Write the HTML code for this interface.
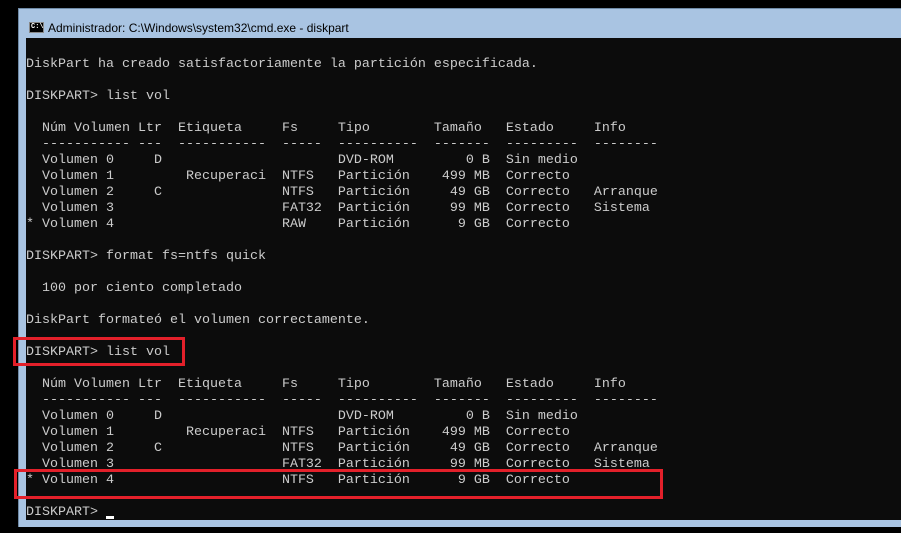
<!DOCTYPE html>
<html><head><meta charset="utf-8"><style>
html,body{margin:0;padding:0;background:#000;width:901px;height:533px;overflow:hidden;position:relative}
#win{position:absolute;left:18px;top:8px;width:900px;height:519px;background:#a9c4e2;border-left:1px solid #6f8aa6;border-top:1px solid #6f8aa6;box-sizing:border-box}
#title{position:absolute;left:48px;top:21px;font:12px "Liberation Sans",sans-serif;color:#000}
#icon{position:absolute;left:29px;top:22px;width:15px;height:11px;background:#000;border:1px solid #888;box-sizing:border-box}
#icon span{position:absolute;left:1px;top:0;font:bold 7px "Liberation Mono",monospace;color:#fff}
#content{position:absolute;left:26px;top:38px;width:875px;height:482px;background:#0c0c0c}
pre{position:absolute;left:26px;top:41px;margin:0;font:13.33px/16px "Liberation Mono",monospace;color:#cccccc}
.box{position:absolute;border:3px solid #e3202a;box-sizing:border-box}
#cur{position:absolute;left:106px;top:516px;width:8px;height:3px;background:#fff}
</style></head><body>
<div id="win"></div>
<div id="icon"><span>C:\</span></div>
<div id="title">Administrador: C:\Windows\system32\cmd.exe - diskpart</div>
<div id="content"></div>
<pre>

DiskPart ha creado satisfactoriamente la partición especificada.

DISKPART&gt; list vol

  Núm Volumen Ltr  Etiqueta     Fs     Tipo        Tamaño   Estado     Info
  ----------- ---  -----------  -----  ----------  -------  ---------  --------
  Volumen 0     D                      DVD-ROM         0 B  Sin medio
  Volumen 1         Recuperaci  NTFS   Partición    499 MB  Correcto
  Volumen 2     C               NTFS   Partición     49 GB  Correcto   Arranque
  Volumen 3                     FAT32  Partición     99 MB  Correcto   Sistema
* Volumen 4                     RAW    Partición      9 GB  Correcto

DISKPART&gt; format fs=ntfs quick

  100 por ciento completado

DiskPart formateó el volumen correctamente.

DISKPART&gt; list vol

  Núm Volumen Ltr  Etiqueta     Fs     Tipo        Tamaño   Estado     Info
  ----------- ---  -----------  -----  ----------  -------  ---------  --------
  Volumen 0     D                      DVD-ROM         0 B  Sin medio
  Volumen 1         Recuperaci  NTFS   Partición    499 MB  Correcto
  Volumen 2     C               NTFS   Partición     49 GB  Correcto   Arranque
  Volumen 3                     FAT32  Partición     99 MB  Correcto   Sistema
* Volumen 4                     NTFS   Partición      9 GB  Correcto

DISKPART&gt; </pre>
<div id="cur"></div>
<div class="box" style="left:13px;top:337px;width:172px;height:29px"></div>
<div class="box" style="left:14px;top:469px;width:649px;height:30px"></div>
</body></html>
